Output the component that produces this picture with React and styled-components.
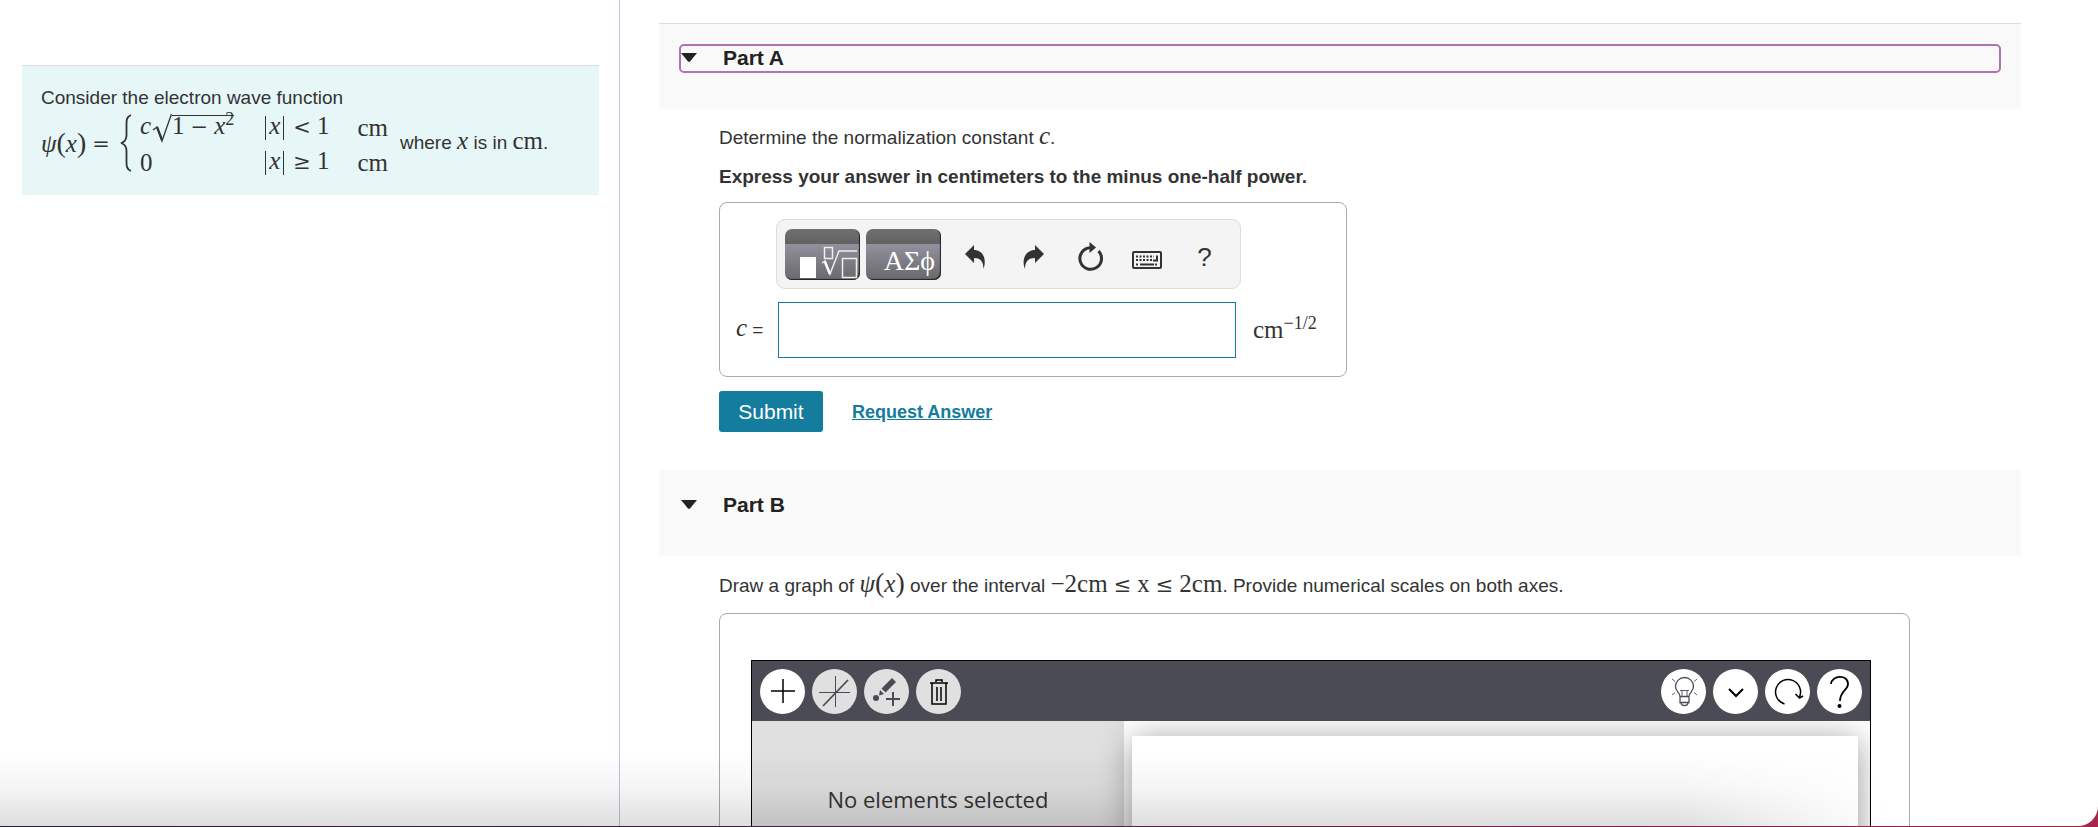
import React, { useState } from "react";
import styled, { createGlobalStyle } from "styled-components";

function Psi() {
	return (
		<Formula>
			<i>ψ</i>
			<Paren>(</Paren>
			<i>x</i>
			<Paren>)</Paren>
		</Formula>
	);
}

function AbsX() {
	return (
		<>
			<Bar />
			<i>x</i>
			<Bar />
		</>
	);
}

function PartHeader({ title, focused, open, onToggle }) {
	return (
		<Header $topLine={focused}>
			<Toggle $focused={focused} aria-expanded={open} onClick={onToggle}>
				<Caret viewBox="0 0 16 9">
					<path d="M0 0h16L9 8.4q-1 .9-2 0z" fill="#222" />
				</Caret>
				{title}
			</Toggle>
		</Header>
	);
}

function App() {
	const [openA, setOpenA] = useState(true);
	const [openB, setOpenB] = useState(true);

	return (
		<Desktop>
			<GlobalStyle />
			<Page>
				<Sidebar>
					<Problem>
						<div>Consider the electron wave function</div>
						<Equation>
							<Psi />
							<Formula>
								<Rel>=</Rel>
							</Formula>
							<Brace viewBox="0 0 12 58">
								<path
									d="M11 1C6 3 6.5 7 6.5 12V21C6.5 26 5 28 1 29C5 30 6.5 32 6.5 37V46C6.5 51 6 55 11 57"
									fill="none"
									stroke="#333"
									strokeWidth="1.8"
								/>
							</Brace>
							<Cases>
								<Formula>
									<i>c</i>
									<Radical viewBox="0 0 20 30">
										<path
											d="M1 17L5 14L10 28L19.5 1"
											fill="none"
											stroke="#333"
											strokeWidth="1.3"
										/>
										<path d="M5 14L10 27" stroke="#333" strokeWidth="2.2" />
									</Radical>
									<Radicand>
										1<Rel>−</Rel>
										<i>x</i>
										<Sup>2</Sup>
									</Radicand>
								</Formula>
								<Formula>
									<AbsX />
									<Rel>&lt;</Rel>1
								</Formula>
								<Formula>cm</Formula>
								<Formula>0</Formula>
								<Formula>
									<AbsX />
									<Rel>≥</Rel>1
								</Formula>
								<Formula>cm</Formula>
							</Cases>
							<span>
								where{" "}
								<Formula>
									<i>x</i>
								</Formula>{" "}
								is in <Formula>cm</Formula>.
							</span>
						</Equation>
					</Problem>
				</Sidebar>

				<Main>
					<PartHeader
						title="Part A"
						focused
						open={openA}
						onToggle={() => setOpenA(!openA)}
					/>
					{openA && (
						<PartBody>
							<Prompt>
								Determine the normalization constant{" "}
								<Formula>
									<i>c</i>
								</Formula>
								.
							</Prompt>
							<Instruction>
								Express your answer in centimeters to the minus one-half power.
							</Instruction>
							<AnswerBox>
								<MathToolbar>
									<Palette aria-label="Templates">
										<svg width="75" height="50" viewBox="0 0 75 50">
											<path d="M15 28h16v21H15z" fill="#fff" />
											<g fill="none" stroke="#eee" strokeWidth="1.5">
												<path d="M39.5 18.5h8v11h-8z" />
												<path d="M37 34l3-2 5 13L54 22h18" />
												<path d="M57.5 29.5h14v19h-14z" />
											</g>
											<path d="M40 33l5 12" stroke="#fff" strokeWidth="2.5" />
										</svg>
									</Palette>
									<Palette aria-label="Symbols">
										<Symbols>ΑΣϕ</Symbols>
									</Palette>
									<Tools>
										<Tool aria-label="Undo">
											<svg width="22" height="24" viewBox="0 0 22 24">
												<path
													d="M0 9L9 0V5C18 5 22 14 18.5 24C18.5 16 15 13 9 13V18Z"
													fill="#333"
												/>
											</svg>
										</Tool>
										<Tool aria-label="Redo">
											<svg width="22" height="24" viewBox="0 0 22 24">
												<path
													d="M22 9L13 0V5C4 5 -1 14 3 24C3 16 7 13 13 13V18Z"
													fill="#333"
												/>
											</svg>
										</Tool>
										<Tool aria-label="Reset">
											<svg width="26" height="30" viewBox="0 0 26 30">
												<path
													d="M21.5 9A10.8 10.8 0 1 1 13 5.7"
													fill="none"
													stroke="#333"
													strokeWidth="3"
												/>
												<path d="M12.5 0L19 5.5L12.5 11Z" fill="#333" />
											</svg>
										</Tool>
										<Tool $low aria-label="Keyboard">
											<svg width="30" height="18" viewBox="0 0 30 18">
												<rect
													x="1"
													y="1"
													width="28"
													height="16"
													rx="1"
													fill="none"
													stroke="#333"
													strokeWidth="2"
												/>
												<path
													d="M4 5.5h18M4 9h16M4 13.5h3M23 13.5h3"
													stroke="#333"
													strokeWidth="2"
													strokeDasharray="2 1.5"
												/>
												<path
													d="M8 13.5h14M25 4.5v5h-4"
													fill="none"
													stroke="#333"
													strokeWidth="2"
												/>
											</svg>
										</Tool>
										<Tool aria-label="Help">?</Tool>
									</Tools>
								</MathToolbar>
								<AnswerRow>
									<AnswerLabel htmlFor="answer">
										<Formula>
											<i>c</i>
										</Formula>{" "}
										=
									</AnswerLabel>
									<AnswerInput id="answer" type="text" />
									<Formula>
										cm<Sup>−1/2</Sup>
									</Formula>
								</AnswerRow>
							</AnswerBox>
							<Actions>
								<Submit>Submit</Submit>
								<Request href="#request">Request Answer</Request>
							</Actions>
						</PartBody>
					)}

					<PartHeader
						title="Part B"
						open={openB}
						onToggle={() => setOpenB(!openB)}
					/>
					{openB && (
						<PartBody>
							<Prompt>
								Draw a graph of <Psi /> over the interval{" "}
								<Formula>
									−2cm<Rel>≤</Rel>x<Rel>≤</Rel>2cm
								</Formula>
								. Provide numerical scales on both axes.
							</Prompt>
							<GraphBox>
								<Grapher>
									<GraphBar>
										<Round aria-label="Add element">
											<svg width="45" height="45" viewBox="0 0 45 45">
												<path
													d="M11 22h24M23 10v24"
													stroke="#000"
													strokeWidth="1.5"
												/>
											</svg>
										</Round>
										<Round $muted aria-label="Line">
											<svg width="45" height="45" viewBox="0 0 45 45">
												<path
													d="M7 23.5h31M23.5 7v31"
													stroke="#4b4b55"
													strokeWidth="1"
												/>
												<path
													d="M11 37L36 11"
													stroke="#4b4b55"
													strokeWidth="1.8"
												/>
											</svg>
										</Round>
										<Round $muted aria-label="Add label">
											<svg width="45" height="45" viewBox="0 0 45 45">
												<circle cx="12" cy="29" r="3" fill="#4b4b55" />
												<path
													d="M28 9l4 4-10.5 10.5-4-4zM16 21l4 4-5 1.5z"
													fill="#4b4b55"
												/>
												<path
													d="M22 30h14M29 23v14"
													stroke="#4b4b55"
													strokeWidth="2"
												/>
											</svg>
										</Round>
										<Round $muted aria-label="Delete">
											<svg width="45" height="45" viewBox="0 0 45 45">
												<path
													d="M14 14h18M16 14h14v21H16zM20 13v-2h6v2M21 18v14M25 18v14"
													fill="none"
													stroke="#000"
													strokeWidth="1.5"
												/>
											</svg>
										</Round>
										<Spacer />
										<Round aria-label="Hints">
											<svg width="45" height="45" viewBox="0 0 45 45">
												<g fill="none" stroke="#4b4b55" strokeWidth="1.3">
													<path d="M19 27.5c0-4-4.5-5-4.5-10a9 9 0 0 1 18 0c0 5-4.5 6-4.5 10zM19 27.5v6h9v-6M20 33.5c0 4 7 4 7 0" />
													<path
														d="M19 21.5h9M21 22v5M26 22v5M11 10l3 2.5M36 10l-3 2.5M11 26l3-2.5M36 26l-3-2.5"
														strokeWidth="0.9"
													/>
												</g>
											</svg>
										</Round>
										<Round aria-label="More">
											<svg width="45" height="45" viewBox="0 0 45 45">
												<path
													d="M16 20l7 7 7-7"
													fill="none"
													stroke="#000"
													strokeWidth="2"
												/>
											</svg>
										</Round>
										<Round aria-label="Reset graph">
											<svg width="45" height="45" viewBox="0 0 45 45">
												<path
													d="M19.5 35A12.5 12.5 0 1 1 34.5 28M30.5 25l4 4 3.5-2"
													fill="none"
													stroke="#000"
													strokeWidth="1.5"
												/>
											</svg>
										</Round>
										<Round aria-label="Graph help">
											<svg width="45" height="45" viewBox="0 0 45 45">
												<path
													d="M14 15c1-9 17-10 17 0c0 6-8 7-8 17"
													fill="none"
													stroke="#000"
													strokeWidth="1.8"
												/>
												<circle cx="22.5" cy="37" r="2" />
											</svg>
										</Round>
									</GraphBar>
									<GraphArea>
										<Elements>No elements selected</Elements>
										<CanvasWrap>
											<Canvas />
										</CanvasWrap>
									</GraphArea>
								</Grapher>
							</GraphBox>
						</PartBody>
					)}
				</Main>
				<BottomShade />
			</Page>
		</Desktop>
	);
}

export default App;

const GlobalStyle = createGlobalStyle`
	* {
		box-sizing: border-box;
	}

	body {
		margin: 0;
		overflow: hidden;
		color: #333;
		font-family: "Liberation Sans", Arial, sans-serif;
		font-size: 19px;
		line-height: 24px;
	}

	button {
		font-family: inherit;
		cursor: pointer;
	}
`;

const Desktop = styled.div`
	height: 100vh;
	padding-bottom: 1px;
	background: linear-gradient(90deg, #241f38, #4a2048 50%, #a6264c);
`;

const Page = styled.div`
	position: relative;
	display: flex;
	height: 100%;
	overflow: hidden;
	border-bottom-right-radius: 20px;
	background: #fff;
`;

const BottomShade = styled.div`
	position: absolute;
	left: 0;
	right: 0;
	bottom: 0;
	height: 76px;
	pointer-events: none;
	background: linear-gradient(
		to bottom,
		rgba(0, 0, 0, 0),
		rgba(0, 0, 0, 0.04) 50%,
		rgba(0, 0, 0, 0.13)
	);
	mask-image: linear-gradient(90deg, #000 80%, transparent 90%);
`;

const Sidebar = styled.aside`
	flex: 0 0 29.55%;
	padding: 65px 20px 0 22px;
	border-right: 1px solid #b9c6dc;
`;

const Problem = styled.section`
	height: 130px;
	padding: 20px 19px;
	border-top: 1px solid #ddd;
	background: #e7f7f7;
`;

const Equation = styled.div`
	display: flex;
	align-items: center;
	margin-top: -4px;
	white-space: nowrap;
`;

const Formula = styled.span`
	font-family: "Liberation Serif", "Times New Roman", serif;
	font-size: 25px;
	line-height: 20px;
	white-space: nowrap;
`;

const Paren = styled.span`
	font-size: 28px;
`;

const Rel = styled.span`
	margin: 0 6px;
	font-family: "DejaVu Serif", serif;
	font-size: 21px;
`;

const Brace = styled.svg`
	width: 12px;
	height: 58px;
	margin: 0 8px 0 4px;
`;

const Cases = styled.div`
	display: grid;
	grid-template-columns: auto auto auto;
	grid-auto-rows: 35px;
	align-items: center;
	column-gap: 28px;
	margin-right: 12px;
	padding-top: 4px;
`;

const Radical = styled.svg`
	width: 20px;
	height: 30px;
	margin-left: 1px;
	vertical-align: -9px;
`;

const Radicand = styled.span`
	display: inline-block;
	border-top: 1px solid #333;
`;

const Sup = styled.sup`
	font-size: 18px;
	line-height: 0;
`;

const Bar = styled.span`
	display: inline-block;
	width: 1px;
	height: 24px;
	margin: 0 3px;
	vertical-align: -6px;
	background: #333;
`;

const Main = styled.main`
	flex: 1;
	min-width: 0;
	padding: 23px 77px 0 39px;
`;

const Header = styled.div`
	height: 86px;
	padding: 20px 20px 0;
	border-top: 1px solid ${(props) => (props.$topLine ? "#ddd" : "#f9f9f9")};
	background: #f9f9f9;
`;

const Toggle = styled.button`
	display: flex;
	align-items: center;
	gap: 26px;
	width: 100%;
	height: 29px;
	padding: 0 0 2px;
	border: 2px solid ${(props) => (props.$focused ? "#b072b2" : "transparent")};
	border-radius: 5px;
	background: none;
	color: #222;
	font-size: 21px;
	font-weight: bold;
	line-height: 24px;
`;

const Caret = styled.svg`
	width: 16px;
	height: 9px;
`;

const PartBody = styled.div`
	padding: 17px 0 38px 60px;
`;

const Prompt = styled.p`
	margin: 0 0 15px;
`;

const Instruction = styled.p`
	margin: 0 0 13px;
	font-weight: bold;
`;

const AnswerBox = styled.div`
	width: 628px;
	padding: 16px 16px 18px;
	border: 1px solid #aaa;
	border-radius: 8px;
`;

const MathToolbar = styled.div`
	display: flex;
	align-items: center;
	gap: 6px;
	width: 465px;
	height: 70px;
	margin-left: 40px;
	padding: 0 8px;
	border: 1px solid #ddd;
	border-radius: 9px;
	background: #f4f4f4;
`;

const Palette = styled.button`
	display: flex;
	width: 75px;
	height: 51px;
	padding: 0;
	border: 0;
	border-radius: 7px;
	box-shadow: inset -1px -1px 1px #222;
	background: linear-gradient(
		#6f7070,
		#616262 15px,
		#93919d 15px,
		#68686d
	);
`;

const Symbols = styled.span`
	width: 100%;
	padding: 18px 6px 0 0;
	color: #fff;
	font-family: "Liberation Serif", serif;
	font-size: 28px;
	line-height: 28px;
	text-align: right;
`;

const Tools = styled.div`
	display: flex;
	gap: 6px;
	margin-left: 4px;
`;

const Tool = styled.button`
	display: flex;
	align-items: center;
	justify-content: center;
	width: 51px;
	height: 50px;
	padding: ${(props) => (props.$low ? "12px" : "6px")} 0 0;
	border: 0;
	background: none;
	color: #333;
	font-size: 26px;
`;

const AnswerRow = styled.div`
	display: flex;
	align-items: center;
	margin-top: 13px;
`;

const AnswerLabel = styled.label`
	width: 42px;
`;

const AnswerInput = styled.input`
	width: 458px;
	height: 56px;
	margin-right: 17px;
	padding: 0 10px;
	border: 1px solid #147c9c;
	background: #fff;
	font-size: 23px;
`;

const Actions = styled.div`
	display: flex;
	align-items: center;
	gap: 29px;
	margin-top: 14px;
`;

const Submit = styled.button`
	width: 104px;
	height: 41px;
	padding: 0;
	border: 0;
	border-radius: 3px;
	background: #147c9c;
	color: #fff;
	font-size: 21px;
`;

const Request = styled.a`
	color: #147c9c;
	font-size: 18px;
	font-weight: bold;
`;

const GraphBox = styled.div`
	height: 400px;
	margin-right: 111px;
	padding: 46px 38px 0 31px;
	border: 1px solid #aaa;
	border-radius: 8px;
`;

const Grapher = styled.div`
	border: 1px solid #000;
`;

const GraphBar = styled.div`
	display: flex;
	align-items: center;
	gap: 7px;
	height: 60px;
	padding: 0 8px;
	background: #4b4b55;
`;

const Round = styled.button`
	width: 45px;
	height: 45px;
	padding: 0;
	border: 0;
	border-radius: 50%;
	background: ${(props) => (props.$muted ? "#e0e0e0" : "#fff")};

	svg {
		display: block;
	}
`;

const Spacer = styled.div`
	flex: 1;
`;

const GraphArea = styled.div`
	display: flex;
	height: 300px;
	overflow: hidden;
`;

const Elements = styled.div`
	flex: 0 0 372px;
	padding-top: 60px;
	background: #e0e0e0;
	font-family: "Open Sans", "Noto Sans", sans-serif;
	font-size: 22px;
	line-height: 36px;
	text-align: center;
`;

const CanvasWrap = styled.div`
	flex: 1;
	padding: 15px 12px 0 8px;
`;

const Canvas = styled.div`
	height: 285px;
	background: #fff;
	box-shadow: 0 4px 32px rgba(0, 0, 0, 0.4);
`;
